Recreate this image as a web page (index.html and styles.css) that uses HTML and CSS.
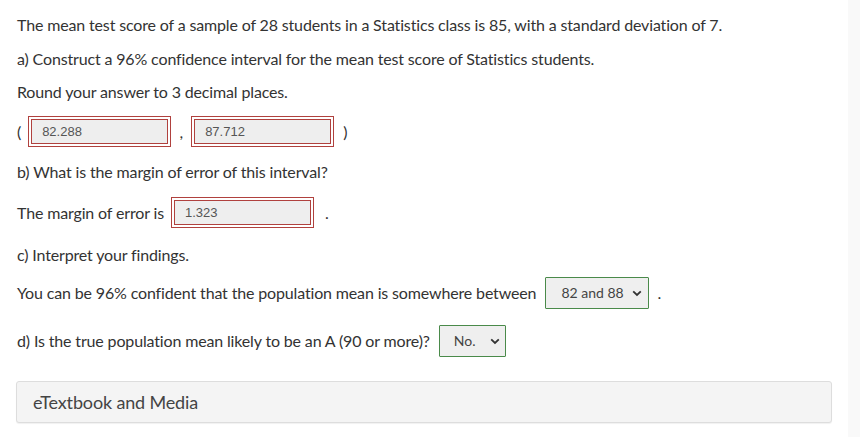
FILE: index.html
```html
<!DOCTYPE html>
<html>
<head>
<meta charset="utf-8">
<link rel="stylesheet" href="styles.css">
</head>
<body>
<div class="page">
  <p class="line l1">The mean test score of a sample of 28 students in a Statistics class is 85, with a standard deviation of 7.</p>
  <p class="line l2">a) Construct a 96% confidence interval for the mean test score of Statistics students.</p>
  <p class="line l3">Round your answer to 3 decimal places.</p>
  <div class="row r-int">
    <span class="paren">(</span>
    <span class="mark"><input class="field" type="text" value="82.288" readonly></span>
    <span class="comma">,</span>
    <span class="mark"><input class="field" type="text" value="87.712" readonly></span>
    <span class="paren">)</span>
  </div>
  <p class="line lb">b) What is the margin of error of this interval?</p>
  <div class="row r-moe">
    <span>The margin of error is</span>
    <span class="mark"><input class="field" type="text" value="1.323" readonly></span>
    <span class="dot">.</span>
  </div>
  <p class="line lc">c) Interpret your findings.</p>
  <div class="row r-int2">
    <span>You can be 96% confident that the population mean is somewhere between</span>
    <span class="sel sel-wide"><span class="sel-text">82 and 88</span><svg class="chev" width="10" height="7" viewBox="0 0 10 7"><path d="M1.2 1.3 L5 5 L8.8 1.3" fill="none" stroke="#333" stroke-width="1.8"/></svg></span>
    <span class="dot">.</span>
  </div>
  <div class="row r-d">
    <span>d) Is the true population mean likely to be an A (90 or more)?</span>
    <span class="sel sel-narrow"><span class="sel-text">No.</span><svg class="chev" width="10" height="7" viewBox="0 0 10 7"><path d="M1.2 1.3 L5 5 L8.8 1.3" fill="none" stroke="#333" stroke-width="1.8"/></svg></span>
  </div>
  <div class="media">eTextbook and Media</div>
</div>
</body>
</html>
```
FILE: styles.css
```css
html, body {
  margin: 0;
  padding: 0;
}
body {
  background: #f9f9f9;
  font-family: Lato, "Liberation Sans", sans-serif;
  color: #333;
  font-size: 16px;
}
.page {
  width: 848px;
  min-height: 437px;
  background: #fff;
  box-sizing: border-box;
  padding: 13px 16px 0 16px;
}
.line {
  margin: 0;
  line-height: 24px;
  padding-left: 1px;
  letter-spacing: -0.15px;
}
.l2 { margin-top: 10px; }
.l3 { margin-top: 9px; }
.row {
  display: flex;
  align-items: center;
  padding-left: 1px;
  line-height: 24px;
  letter-spacing: -0.15px;
}
.r-int { margin-top: 12px; }
.paren { margin-right: 7px; }
.r-int .paren:last-child { margin-left: 9px; margin-right: 0; }
.comma { width: 20px; text-align: center; }
.mark {
  display: inline-block;
  border: 1px solid #b0413e;
  padding: 2px;
  line-height: 0;
}
.field {
  width: 137px;
  height: 25px;
  box-sizing: border-box;
  border: 1px solid #b0413e;
  background: #eeeeee;
  margin: 0;
  padding: 0 10px;
  font-family: "Liberation Sans", Arial, sans-serif;
  font-size: 13px;
  letter-spacing: 0;
  color: #555;
  outline: none;
}
.lb { margin-top: 13px; }
.r-moe { margin-top: 13px; gap: 7px; }
.r-moe .dot { margin-left: 4px; }
.lc { margin-top: 15px; }
.r-int2 { margin-top: 10px; gap: 9px; }
.r-int2 .dot { margin-left: -1px; }
.sel {
  display: inline-flex;
  align-items: center;
  justify-content: space-between;
  box-sizing: border-box;
  height: 32px;
  border: 1px solid #4a8a4a;
  border-radius: 1px;
  background: #efefef;
  font-size: 14px;
  letter-spacing: 0;
  color: #444;
  padding: 0 6px 0 15px;
}
.sel-wide { width: 104px; }
.sel-narrow { width: 67px; padding-left: 14px; padding-right: 5px; }
.chev { display: block; }
.r-d { margin-top: 16px; gap: 9px; }
.media {
  margin-top: 24px;
  height: 42px;
  box-sizing: border-box;
  background: #f4f4f4;
  border: 1px solid #dddddd;
  border-radius: 3px;
  box-shadow: 0 1px 1px rgba(0,0,0,0.06);
  font-size: 18px;
  line-height: 40px;
  padding-left: 16px;
  color: #444;
  letter-spacing: -0.15px;
}
```
